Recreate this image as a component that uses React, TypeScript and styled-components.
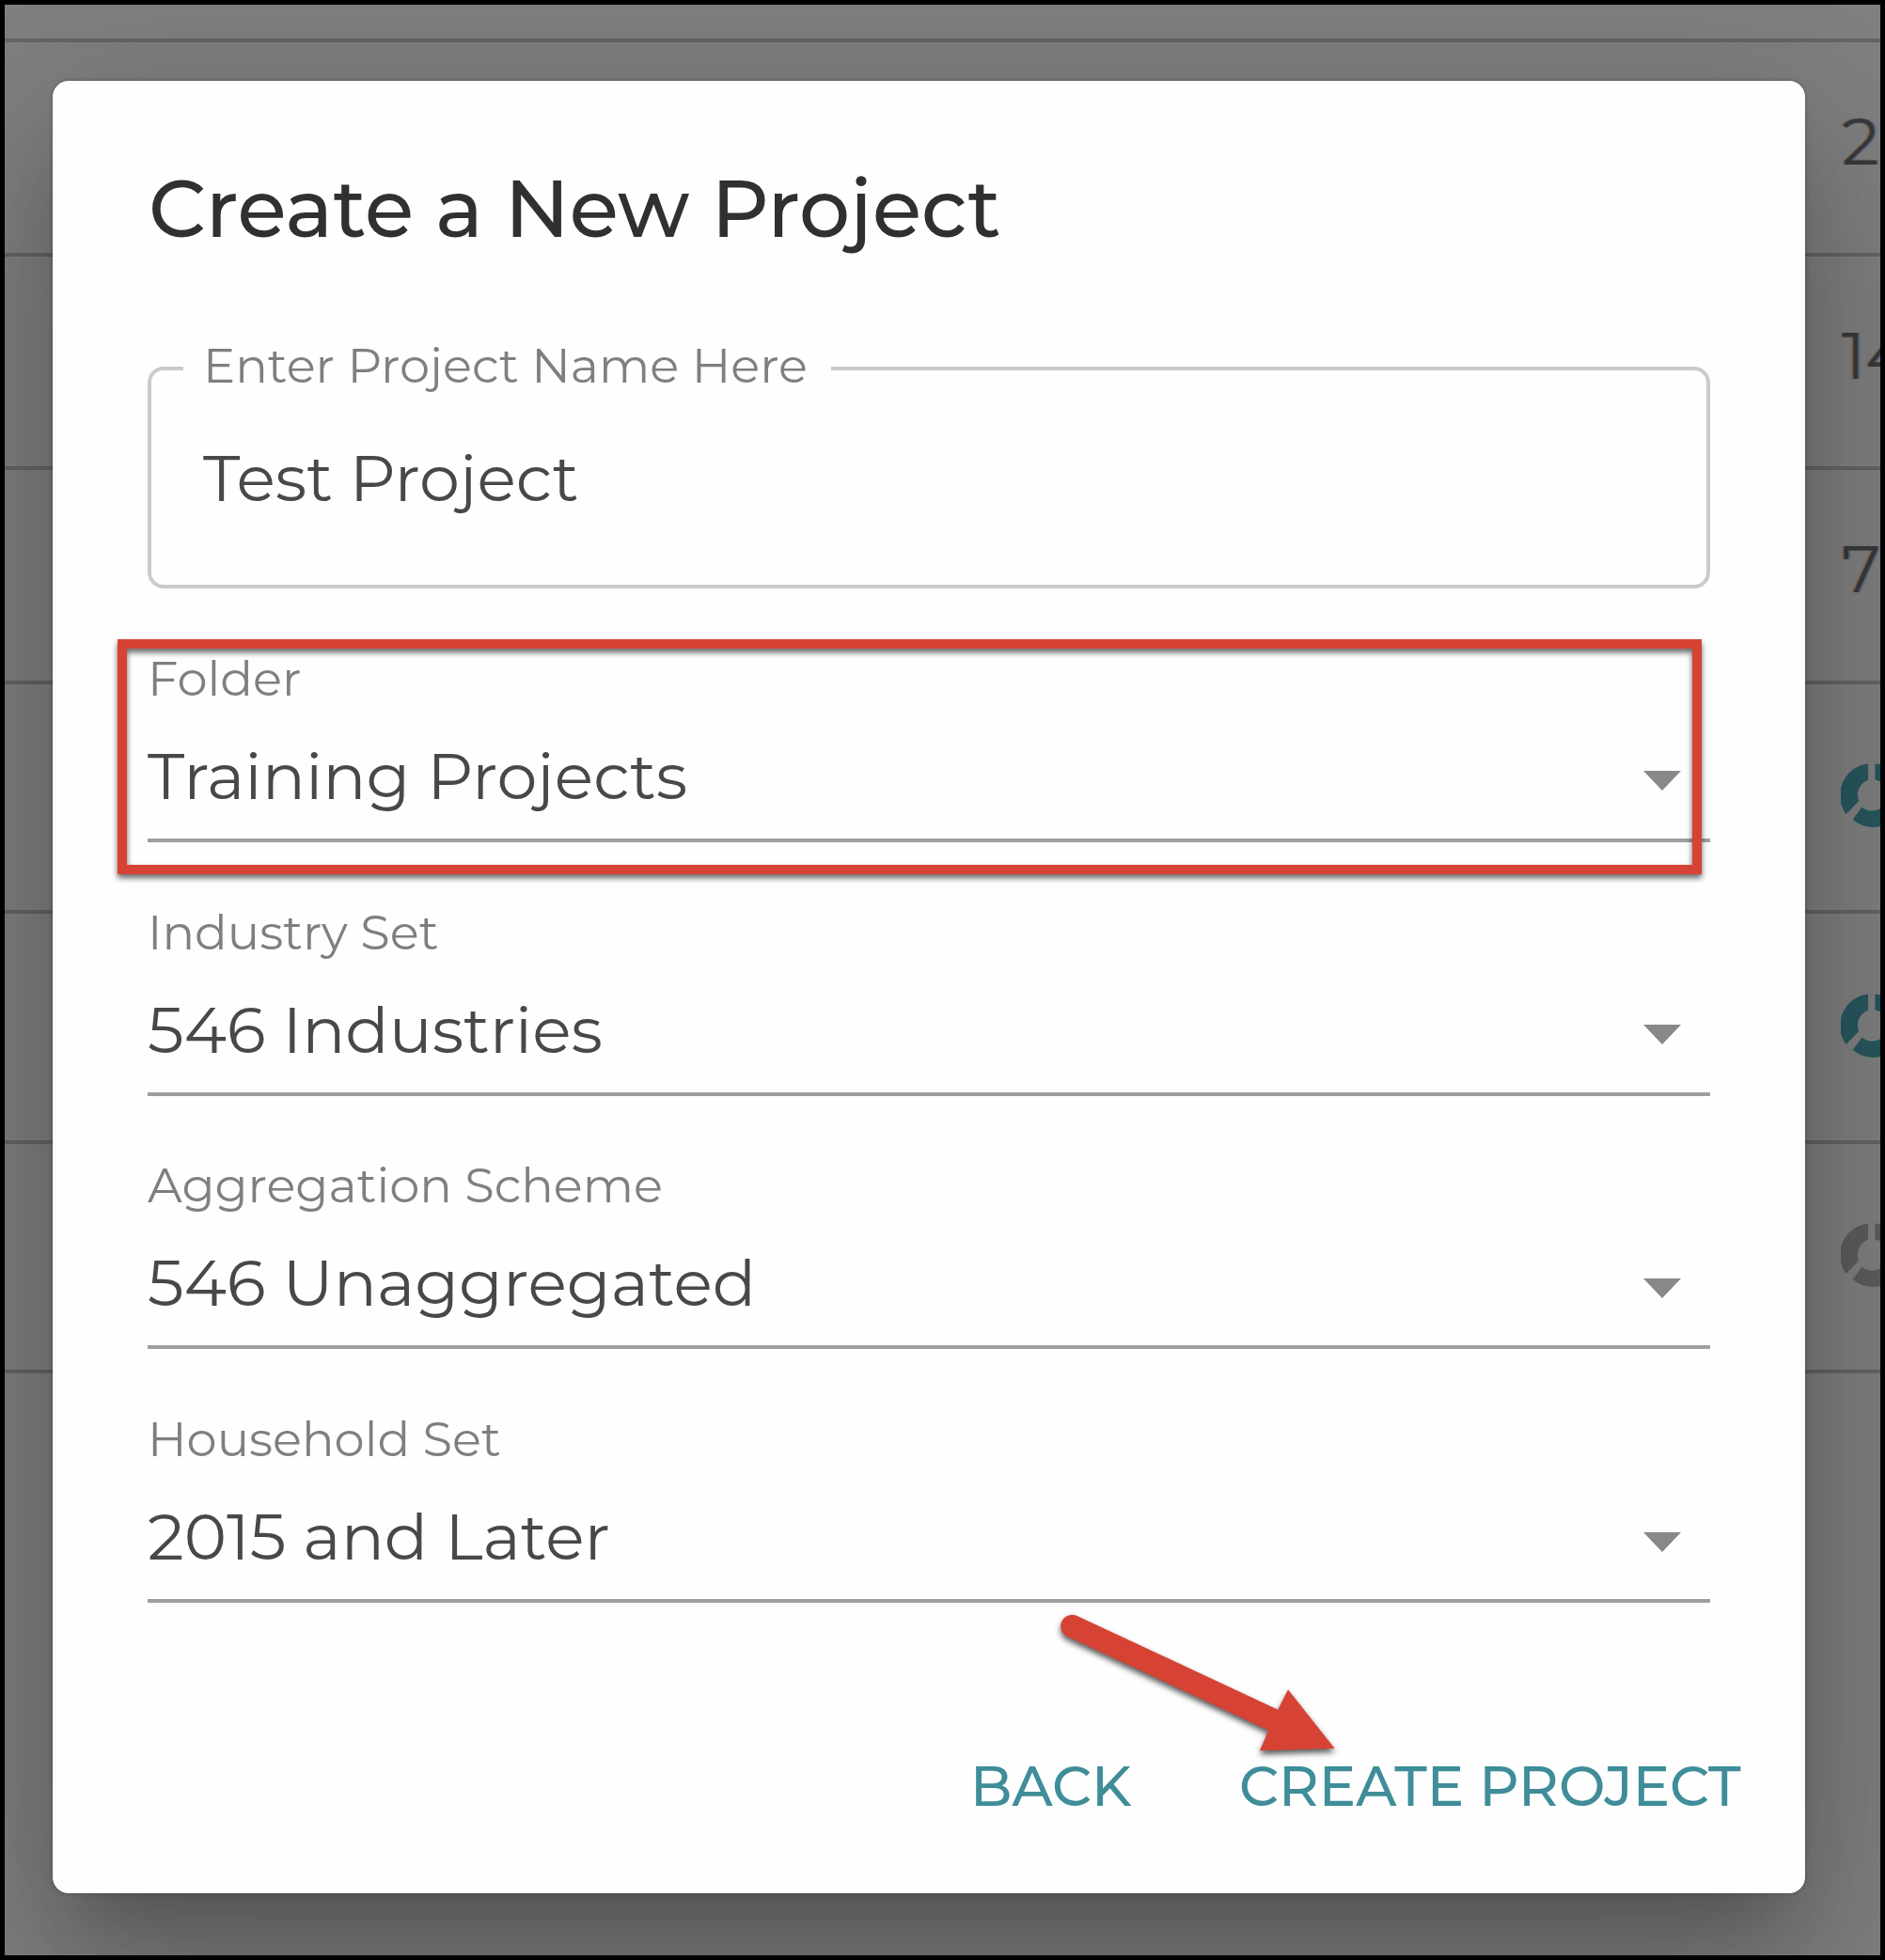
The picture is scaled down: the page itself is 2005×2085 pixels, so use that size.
import React from "react";
import styled, { createGlobalStyle } from "styled-components";

const GlobalStyle = createGlobalStyle`
  *, *::before, *::after { box-sizing: border-box; }
  body {
    margin: 0;
    background: #000;
    font-family: Montserrat, Inter, "Open Sans", sans-serif;
  }
`;

const Screen = styled.div`
  display: grid;
  grid-template: 2075px / 1995px;
  width: 2005px;
  height: 2085px;
  border: 5px solid #000;
  background: #808080;
  overflow: hidden;
`;

const BackdropTable = styled.div`
  grid-area: 1 / 1;
  display: flex;
  flex-direction: column;
`;

const TableRow = styled.div<{ $height: number }>`
  display: flex;
  flex: none;
  align-items: center;
  justify-content: flex-end;
  height: ${(p) => p.$height}px;
  border-bottom: 4px solid #656565;
`;

const CountCell = styled.span`
  width: 41px;
  margin-bottom: 13px;
  font-size: 70px;
  line-height: 80px;
  color: #3a3a3c;
  white-space: nowrap;
  text-shadow: -2px 0 1px rgba(140, 85, 45, 0.45), 2px 0 1px rgba(45, 85, 140, 0.45);
`;

const DonutIcon = styled.svg<{ $muted?: boolean }>`
  flex: none;
  width: 68px;
  height: 68px;
  margin-right: -25.5px;
  margin-bottom: 3px;
  fill: ${(p) => (p.$muted ? "#5d5d5d" : "#28575f")};
`;

const Dialog = styled.div`
  grid-area: 1 / 1;
  position: relative;
  display: flex;
  flex-direction: column;
  width: 1864px;
  height: 1928px;
  margin: 81px 0 0 51px;
  padding: 86px 101px 0;
  border-radius: 17px;
  background: #fefefe;
  box-shadow:
    0 0 4px rgba(0, 0, 0, 0.3),
    0 47px 64px -30px rgba(0, 0, 0, 0.2),
    0 102px 162px 13px rgba(0, 0, 0, 0.14),
    0 38px 196px 34px rgba(0, 0, 0, 0.12);

  & > * { flex-shrink: 0; }
`;

const Title = styled.h1`
  margin: 0 0 0 1px;
  font-size: 85.1px;
  font-weight: 500;
  line-height: 100px;
  white-space: nowrap;
  color: #303030;
`;

const Label = styled.span`
  font-size: 51.2px;
  font-weight: 400;
  line-height: 51px;
  white-space: nowrap;
  color: #7f7f7f;
`;

const Value = styled.span`
  font-size: 68.4px;
  font-weight: 400;
  line-height: 81px;
  white-space: nowrap;
  color: #484848;
`;

const OutlinedField = styled.div`
  position: relative;
  height: 236px;
  margin-top: 118px;
  padding: 74px 0 0 55px;
  border: 4px solid #cbcbcb;
  border-radius: 17px;
`;

const FloatingLabel = styled.div`
  position: absolute;
  top: -31px;
  left: 34px;
  display: flex;
  width: 689px;
  padding-left: 21px;
  background: #fefefe;
`;

const SelectField = styled.div`
  display: flex;
  flex-direction: column;
  gap: 38px;
  height: 200px;
  margin-top: 69.8px;
  border-bottom: 4px solid #9f9f9f;
`;

const SelectRow = styled.div`
  display: flex;
  align-items: center;
  justify-content: space-between;
  padding-right: 31px;
`;

const Caret = styled.svg`
  width: 40px;
  height: 21px;
  margin-top: 11px;
  fill: #888;
`;

const Actions = styled.div`
  display: grid;
  grid-template-columns: 286px 1fr;
  margin: 154px -60px 0 875px;
`;

const ActionButton = styled.button`
  padding: 0;
  border: 0;
  background: none;
  font: 500 58.9px / 82px Montserrat, Inter, sans-serif;
  color: #3f8d99;
  text-align: left;
  white-space: nowrap;
`;

const Highlight = styled.div`
  position: absolute;
  top: 594px;
  left: 69px;
  width: 1685px;
  height: 250px;
  border: 10px solid #d64335;
  filter: drop-shadow(0 4px 3px rgba(0, 0, 0, 0.6));
`;

const Arrow = styled.svg`
  position: absolute;
  top: 1619px;
  left: 1059px;
  width: 320px;
  height: 180px;
  overflow: visible;
  fill: #d64335;
  filter: drop-shadow(0 4px 3px rgba(0, 0, 0, 0.65));
`;

function Donut({ muted }: { muted?: boolean }) {
  return (
    <DonutIcon $muted={muted} viewBox="0 0 68 68">
      <path d="M29 .4A34 34 0 0 0 5.5 54L19.3 40A16.5 16.5 0 0 1 29 17.8Z" />
      <path d="M12.7 60A34 34 0 0 0 55 61L43 47.5A16.5 16.5 0 0 1 22.5 46.5Z" />
      <path d="M36.5 .4A34 34 0 0 1 68 34H51A17 17 0 0 0 36.5 17.5Z" />
    </DonutIcon>
  );
}

const selects = [
  { label: "Folder", value: "Training Projects" },
  { label: "Industry Set", value: "546 Industries" },
  { label: "Aggregation Scheme", value: "546 Unaggregated" },
  { label: "Household Set", value: "2015 and Later" },
];

export default function App() {
  return (
    <>
      <GlobalStyle />
      <Screen>
        <BackdropTable>
          <TableRow $height={40} />
          <TableRow $height={227.5}><CountCell>2</CountCell></TableRow>
          <TableRow $height={227.5}><CountCell>14</CountCell></TableRow>
          <TableRow $height={227.5}><CountCell>7</CountCell></TableRow>
          <TableRow $height={244.5}><Donut /></TableRow>
          <TableRow $height={244.5}><Donut /></TableRow>
          <TableRow $height={244.5}><Donut muted /></TableRow>
        </BackdropTable>
        <Dialog role="dialog">
          <Title>Create a New Project</Title>
          <OutlinedField>
            <FloatingLabel>
              <Label>Enter Project Name Here</Label>
            </FloatingLabel>
            <Value>Test Project</Value>
          </OutlinedField>
          {selects.map(({ label, value }) => (
            <SelectField key={label}>
              <Label>{label}</Label>
              <SelectRow>
                <Value>{value}</Value>
                <Caret viewBox="0 0 40 21"><path d="M0 0H40L20 21Z" /></Caret>
              </SelectRow>
            </SelectField>
          ))}
          <Actions>
            <ActionButton>BACK</ActionButton>
            <ActionButton>CREATE PROJECT</ActionButton>
          </Actions>
          <Highlight />
          <Arrow viewBox="0 0 320 180">
            <path d="M30.7 14L244.3 113.7L255 92.3L304.7 155L225 157.3L234.3 135.7L20 35.7A12 12 0 0 1 30.7 14Z" />
          </Arrow>
        </Dialog>
      </Screen>
    </>
  );
}
